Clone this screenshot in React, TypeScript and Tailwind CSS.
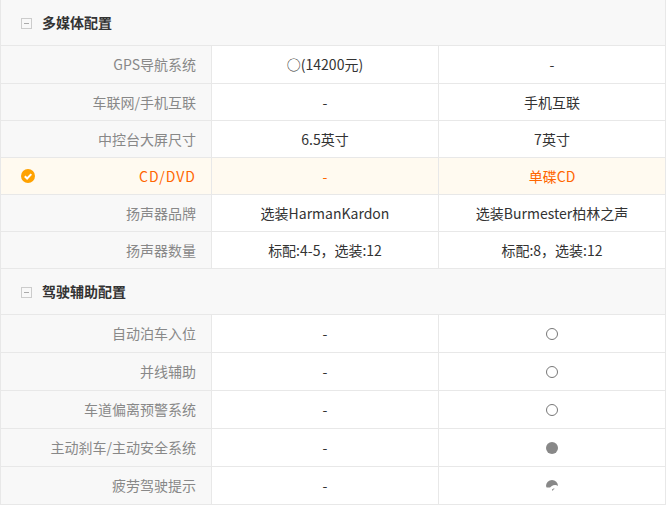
import { Fragment } from "react";

type Mark = "hollow" | "solid" | "partial";
type Row = {
  label: string;
  a: string;
  b: string | Mark;
  height?: string;
  active?: boolean;
};

const multimedia: Row[] = [
  { label: "GPS导航系统", a: "○(14200元)", b: "-", height: "h-[38px]" },
  { label: "车联网/手机互联", a: "-", b: "手机互联" },
  { label: "中控台大屏尺寸", a: "6.5英寸", b: "7英寸" },
  { label: "CD/DVD", a: "-", b: "单碟CD", active: true },
  { label: "扬声器品牌", a: "选装HarmanKardon", b: "选装Burmester柏林之声" },
  { label: "扬声器数量", a: "标配:4-5，选装:12", b: "标配:8，选装:12" },
];

const driving: Row[] = [
  { label: "自动泊车入位", a: "-", b: "hollow", height: "h-[38px]" },
  { label: "并线辅助", a: "-", b: "hollow", height: "h-[38px]" },
  { label: "车道偏离预警系统", a: "-", b: "hollow", height: "h-[38px]" },
  { label: "主动刹车/主动安全系统", a: "-", b: "solid", height: "h-[38px]" },
  { label: "疲劳驾驶提示", a: "-", b: "partial", height: "h-[38px]" },
];

function MarkIcon({ mark }: { mark: Mark }) {
  return (
    <svg width="14" height="14" viewBox="0 0 14 14">
      {mark === "hollow" && (
        <circle cx="7" cy="7" r="5.5" fill="none" stroke="#777" strokeWidth="1" />
      )}
      {mark === "solid" && <circle cx="7" cy="7" r="6" fill="#888" />}
      {mark === "partial" && (
        <>
          <path d="M1 7a6 6 0 0 1 12 0c-2-1.6-4.5-1.2-6.5 0.2L5 8.6 1.6 8.6Z" fill="#888" />
          <path d="M7 10.5l2-1.2 0.6 0.6-1.2 0.6-0.4 1H7Z" fill="#888" />
        </>
      )}
    </svg>
  );
}

function SectionHeader({ title }: { title: string }) {
  return (
    <div className="flex h-[46px] items-center border-b border-[#e8e8e8] bg-[#f8f8f8] pl-[20px]">
      <span className="flex h-[11px] w-[11px] translate-y-px items-center justify-center border border-[#cccccc] bg-[#f8f8f8]">
        <span className="h-px w-[5px] bg-[#aaaaaa]" />
      </span>
      <span className="ml-[10px] text-[14px] font-bold text-[#333333]">{title}</span>
    </div>
  );
}

function SpecRow({ row }: { row: Row }) {
  const mark = row.b === "hollow" || row.b === "solid" || row.b === "partial";
  const value = row.active ? "text-[#ff6600]" : "text-[#333333]";
  return (
    <div
      className={`grid grid-cols-[211px_227px_226px] border-b border-[#e8e8e8] ${row.height ?? "h-[37px]"} ${row.active ? "bg-[#fffaf0]" : "bg-white"}`}
    >
      <div
        className={`relative flex items-center justify-end border-r border-[#e8e8e8] pr-[15px] ${row.active ? "tracking-[1px] text-[#ff6600]" : "bg-[#f8f8f8] text-[#888888]"}`}
      >
        {row.active && (
          <svg className="absolute top-[11px] left-[20px]" width="14" height="14" viewBox="0 0 14 14">
            <circle cx="7" cy="7" r="7" fill="#ffa200" />
            <path d="M3.8 7.2l2.3 2.3 4.2-4.4" fill="none" stroke="#fff" strokeWidth="2" />
          </svg>
        )}
        {row.label}
      </div>
      <div className={`flex items-center justify-center border-r border-[#e8e8e8] ${value}`}>{row.a}</div>
      <div className={`flex items-center justify-center ${value}`}>
        {mark ? <MarkIcon mark={row.b as Mark} /> : row.b}
      </div>
    </div>
  );
}

export default function App() {
  return (
    <div className="h-[505px] w-[666px] overflow-hidden bg-white font-['Noto_Sans_CJK_SC','Liberation_Sans',sans-serif] text-[14px]">
      <div className="w-[666px] border-x border-[#e8e8e8]">
        {[
          { title: "多媒体配置", rows: multimedia },
          { title: "驾驶辅助配置", rows: driving },
        ].map((section) => (
          <Fragment key={section.title}>
            <SectionHeader title={section.title} />
            {section.rows.map((row) => (
              <SpecRow key={row.label} row={row} />
            ))}
          </Fragment>
        ))}
      </div>
    </div>
  );
}
